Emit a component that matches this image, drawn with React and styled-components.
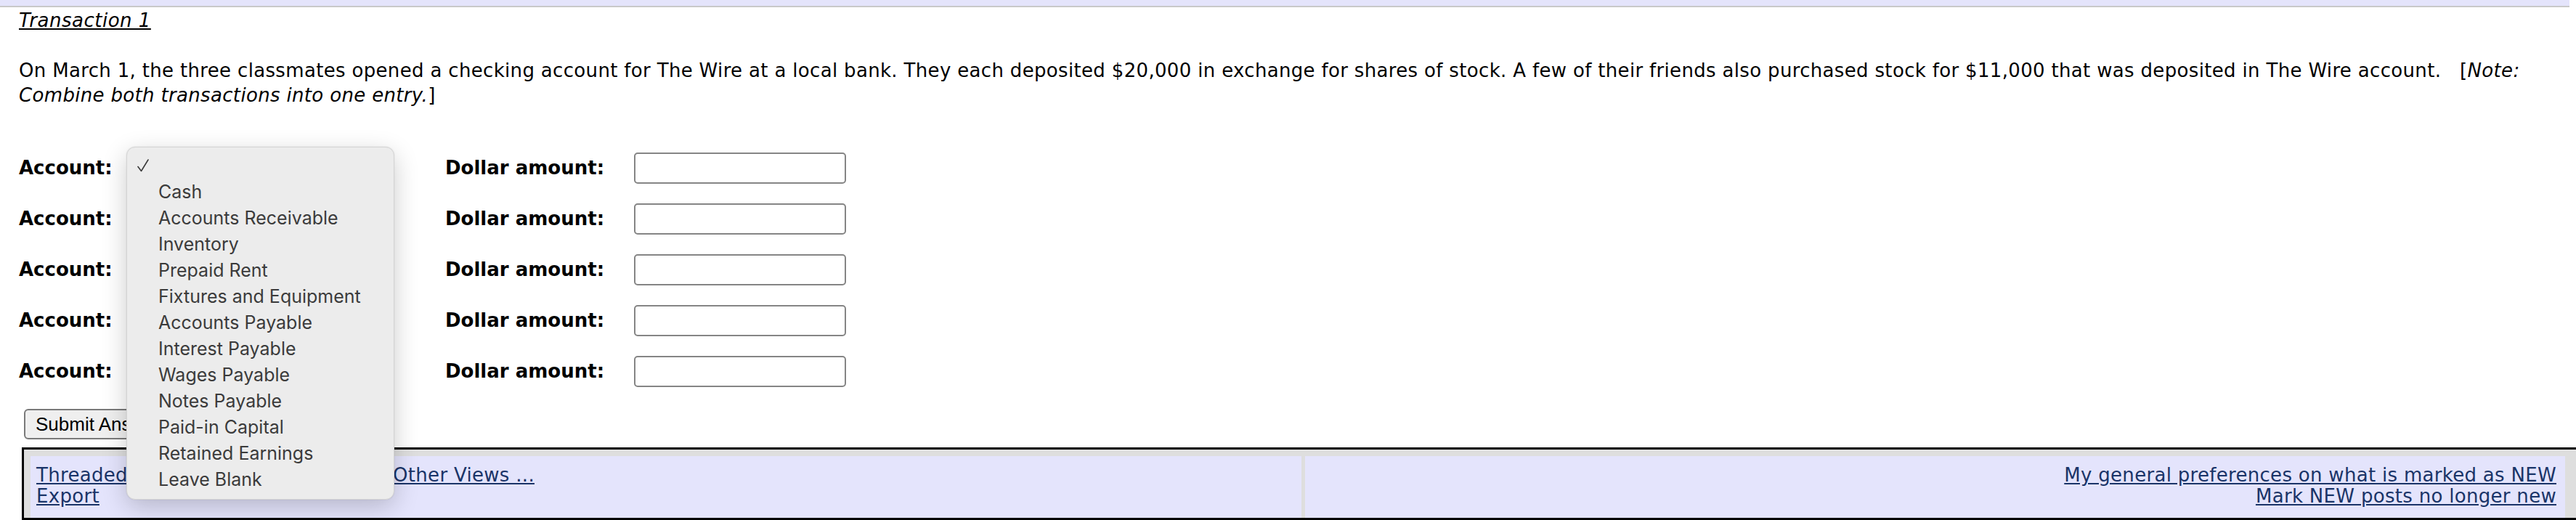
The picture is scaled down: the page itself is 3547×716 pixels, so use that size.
import React from "react";
import styled, { createGlobalStyle } from "styled-components";

const GlobalStyle = createGlobalStyle`
  html, body {
    margin: 0;
    padding: 0;
    background: #fff;
    overflow: hidden;
  }
  body {
    font-family: "DejaVu Sans", Verdana, sans-serif;
    font-size: 26px;
    letter-spacing: 0.3px;
    color: #000;
  }
`;

const TopBar = styled.div`
  height: 8px;
  margin-right: 9px;
  background: #e4e4fb;
  border-bottom: 2px solid #c9c9c9;
`;

const Content = styled.div`
  padding-left: 26px;
`;

const Heading = styled.div`
  margin-top: 3px;
  line-height: 30px;
  font-style: italic;
  letter-spacing: 0.5px;
  text-decoration: underline;
`;

const Prompt = styled.p`
  margin: 37px 0 0;
  padding-right: 9px;
  line-height: 34px;
  letter-spacing: 0.33px;

  em {
    font-style: italic;
  }
`;

const Form = styled.div`
  margin-top: 48px;
`;

const Row = styled.div`
  display: flex;
  align-items: center;
  height: 70px;
`;

const Label = styled.span`
  width: ${(p) => p.width}px;
  flex-shrink: 0;
  font-weight: bold;
  letter-spacing: 0;
`;

const SelectCell = styled.div`
  position: relative;
  width: 435px;
  flex-shrink: 0;
`;

const SelectBox = styled.div`
  width: 330px;
  height: 40px;
  box-sizing: border-box;
  border: 2px solid #8a8a8a;
  border-radius: 6px;
  background: #fff;
`;

const AmountInput = styled.input`
  width: 292px;
  height: 43px;
  box-sizing: border-box;
  padding: 0 8px;
  border: 2px solid #858585;
  border-radius: 5px;
  background: #fff;
  font: inherit;
`;

const Menu = styled.ul`
  position: absolute;
  left: -4px;
  top: -9px;
  z-index: 10;
  width: 369px;
  margin: 0;
  padding: 7px 0 9px;
  box-sizing: border-box;
  list-style: none;
  background: #ececec;
  border: 1px solid #d4d4d4;
  border-radius: 12px;
  box-shadow: 0 10px 34px rgba(0, 0, 0, 0.2), 0 0 2px rgba(0, 0, 0, 0.1);
  font-family: Inter, "Noto Sans", sans-serif;
  font-size: 25px;
  letter-spacing: 0;
  color: #3b3b3b;
`;

const MenuItem = styled.li`
  position: relative;
  height: 36px;
  line-height: 36px;
  padding-left: 43px;
  white-space: nowrap;
`;

const Check = styled.svg`
  position: absolute;
  left: 14px;
  top: 9px;
`;

const SubmitButton = styled.button`
  margin: 17px 0 0 7px;
  height: 42px;
  padding: 0 14px;
  border: 2px solid #7a7a7a;
  border-radius: 6px;
  background: #efefef;
  font-family: "Liberation Sans", Arial, sans-serif;
  font-size: 26px;
  color: #000;
`;

const Footer = styled.div`
  display: grid;
  grid-template-columns: 1750px 1735px;
  gap: 5px;
  width: 3530px;
  margin: 11px 0 0 30px;
  padding: 9px 0 0 9px;
  box-sizing: border-box;
  border: 3px solid #000;
  border-right: none;
  background: #dedede;
`;

const FooterCell = styled.div`
  min-height: 61px;
  padding: 12px ${(p) => (p.right ? "12px" : "8px")};
  background: #e4e4fc;
  text-align: ${(p) => (p.right ? "right" : "left")};
  line-height: 29px;
`;

const NavLink = styled.a`
  color: #1a3468;
  text-decoration: underline;
  white-space: nowrap;
`;

const Spacer = styled.span`
  display: inline-block;
  width: ${(p) => p.width}px;
`;

const accounts = [
  "Cash",
  "Accounts Receivable",
  "Inventory",
  "Prepaid Rent",
  "Fixtures and Equipment",
  "Accounts Payable",
  "Interest Payable",
  "Wages Payable",
  "Notes Payable",
  "Paid-in Capital",
  "Retained Earnings",
  "Leave Blank",
];

function AccountMenu() {
  return (
    <Menu>
      <MenuItem>
        <Check width="16" height="18" viewBox="0 0 16 18">
          <path
            d="M1 10.5 L5.5 16.5 L15 1"
            fill="none"
            stroke="#3b3b3b"
            strokeWidth="1.6"
            strokeLinecap="round"
            strokeLinejoin="round"
          />
        </Check>
      </MenuItem>
      {accounts.map((name) => (
        <MenuItem key={name}>{name}</MenuItem>
      ))}
    </Menu>
  );
}

export default function App() {
  const rows = [0, 1, 2, 3, 4];

  return (
    <>
      <GlobalStyle />
      <TopBar />
      <Content>
        <Heading>Transaction 1</Heading>
        <Prompt>
          On March 1, the three classmates opened a checking account for The
          Wire at a local bank. They each deposited $20,000 in exchange for
          shares of stock. A few of their friends also purchased stock for
          $11,000 that was deposited in The Wire account.&nbsp;&nbsp;&nbsp;[
          <em>Note: Combine both transactions into one entry.</em>]
        </Prompt>

        <Form>
          {rows.map((i) => (
            <Row key={i}>
              <Label width={152}>Account:</Label>
              <SelectCell>
                <SelectBox />
                {i === 0 && <AccountMenu />}
              </SelectCell>
              <Label width={260}>Dollar amount:</Label>
              <AmountInput type="text" />
            </Row>
          ))}
        </Form>

        <SubmitButton>Submit Answer</SubmitButton>
      </Content>

      <Footer>
        <FooterCell>
          <NavLink href="#">Threaded</NavLink>
          <Spacer width={40} />
          <NavLink href="#">Chronological</NavLink>
          <Spacer width={144} />
          <NavLink href="#">Other Views ...</NavLink>
          <br />
          <NavLink href="#">Export</NavLink>
        </FooterCell>
        <FooterCell right>
          <NavLink href="#">My general preferences on what is marked as NEW</NavLink>
          <br />
          <NavLink href="#">Mark NEW posts no longer new</NavLink>
        </FooterCell>
      </Footer>
    </>
  );
}
